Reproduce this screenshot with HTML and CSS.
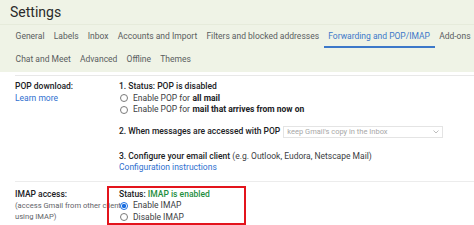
FILE: index.html
```html
<!DOCTYPE html>
<html>
<head>
<meta charset="utf-8">
<link rel="stylesheet" href="styles.css">
</head>
<body>
<div class="page">
  <div class="header">
    <div class="title">Settings</div>
    <div class="tabs">
      <div class="tab-row">
        <span class="tab">General</span>
        <span class="tab">Labels</span>
        <span class="tab">Inbox</span>
        <span class="tab">Accounts and Import</span>
        <span class="tab">Filters and blocked addresses</span>
        <span class="tab active">Forwarding and POP/IMAP</span>
        <span class="tab">Add-ons</span>
      </div>
      <div class="tab-row">
        <span class="tab">Chat and Meet</span>
        <span class="tab">Advanced</span>
        <span class="tab">Offline</span>
        <span class="tab">Themes</span>
      </div>
    </div>
  </div>
  <div class="content">
    <div class="section pop">
      <div class="label">
        <div class="label-title">POP download:</div>
        <div class="link">Learn more</div>
      </div>
      <div class="body">
        <div class="group">
          <div class="heading">1. Status: POP is disabled</div>
          <div class="radio-line"><span class="radio"></span>Enable POP for <b>all mail</b></div>
          <div class="radio-line"><span class="radio"></span>Enable POP for <b>mail that arrives from now on</b></div>
        </div>
        <div class="group group2">
          <span class="heading">2. When messages are accessed with POP</span>
          <span class="select">keep Gmail's copy in the Inbox<svg class="chev" width="6" height="4" viewBox="0 0 6 4"><path d="M0.5 0.5 L3 3 L5.5 0.5" fill="none" stroke="#b5b5b5" stroke-width="0.9"/></svg></span>
        </div>
        <div class="group group3">
          <div><span class="heading">3. Configure your email client</span> <span class="plain">(e.g. Outlook, Eudora, Netscape Mail)</span></div>
          <div class="link">Configuration instructions</div>
        </div>
      </div>
    </div>
    <div class="section imap">
      <div class="label">
        <div class="label-title">IMAP access:</div>
        <div class="note">(access Gmail from other clients using IMAP)</div>
      </div>
      <div class="body">
        <div class="highlight">
          <div class="heading">Status: <span class="green">IMAP is enabled</span></div>
          <div class="radio-line"><span class="radio checked"></span>Enable IMAP</div>
          <div class="radio-line"><span class="radio"></span>Disable IMAP</div>
        </div>
      </div>
    </div>
  </div>
</div>
</body>
</html>
```
FILE: styles.css
```css
html, body {
  margin: 0;
  padding: 0;
  background: #ffffff;
}
.page {
  width: 474px;
  height: 225px;
  overflow: hidden;
  font-family: Roboto, "Liberation Sans", sans-serif;
  color: #202124;
}
.header {
  background: #eff3e6;
  height: 72px;
}
.title {
  height: 24px;
  padding-left: 10px;
  font-size: 14px;
  line-height: 24px;
  color: #2a2a2a;
  border-bottom: 1px solid #e6ebdb;
}
.tabs {
  padding-left: 11px;
}
.tab-row {
  display: flex;
  height: 23px;
  align-items: center;
  white-space: nowrap;
}
.tab {
  font-size: 8.5px;
  color: #5a5d60;
  padding: 0 4.6px;
  height: 23px;
  line-height: 22px;
  box-sizing: border-box;
}
.tab.active {
  color: #3c78c9;
  border-bottom: 2px solid #3c78c9;
}
.content {
  margin-left: 15px;
  border-top: 1px solid #e8e8e8;
  margin-top: 3px;
}
.section {
  display: flex;
  font-size: 8.5px;
  line-height: 11.5px;
}
.pop {
  padding-top: 5px;
  padding-bottom: 7px;
  border-bottom: 1px solid #ececec;
}
.imap {
  padding-top: 7px;
}
.label {
  width: 104px;
  flex: none;
}
.label-title {
  font-weight: 500;
  color: #202124;
}
.link {
  color: #2f6fcf;
}
.note {
  font-size: 7.6px;
  line-height: 11px;
  color: #5f6368;
  width: 112px;
  position: relative;
  z-index: 0;
}
.body {
  flex: 1;
}
.heading {
  font-weight: 500;
  color: #202124;
}
.plain {
  color: #3c4043;
}
.radio-line {
  display: flex;
  align-items: center;
  color: #3c4043;
}
.radio-line b {
  font-weight: 700;
  color: #202124;
  margin-left: 2.5px;
}
.radio {
  width: 6px;
  height: 6px;
  border: 1px solid #7a7a7a;
  border-radius: 50%;
  margin: 0 5px 0 1px;
  flex: none;
}
.radio.checked {
  border-color: #1a6ee0;
  background: radial-gradient(circle, #1a6ee0 0 2px, #ffffff 2.3px);
}
.group2 {
  margin-top: 10px;
  display: flex;
  align-items: center;
  white-space: nowrap;
}
.select {
  display: inline-flex;
  align-items: center;
  justify-content: space-between;
  margin-left: 3px;
  width: 160px;
  height: 12px;
  box-sizing: border-box;
  border: 1px solid #e4e4e4;
  padding: 0 3px;
  font-size: 7.5px;
  color: #a8a8a8;
}
.group3 {
  margin-top: 13px;
  white-space: nowrap;
}
.highlight {
  margin-left: -12px;
  width: 139px;
  height: 39px;
  box-sizing: border-box;
  border: 2px solid #e3141c;
  padding: 1px 0 0 10px;
  margin-top: -3px;
  position: relative;
  z-index: 1;
}
.green {
  color: #1e8e3e;
}
```
